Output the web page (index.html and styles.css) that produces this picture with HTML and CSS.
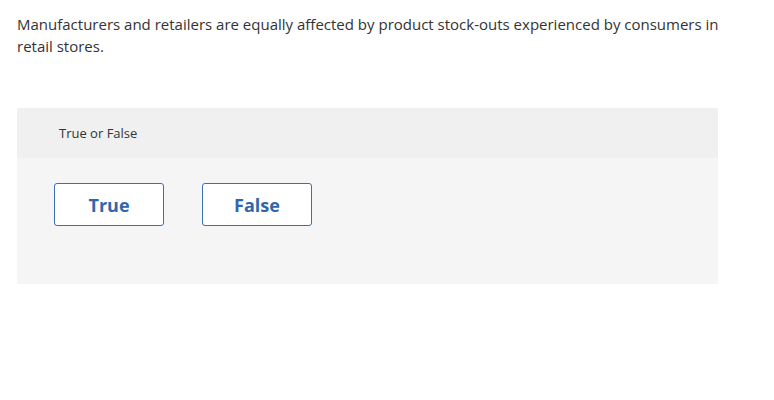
FILE: index.html
```html
<!DOCTYPE html>
<html>
<head>
<meta charset="utf-8">
<link rel="stylesheet" href="styles.css">
</head>
<body>
<div class="page">
  <p class="prompt">Manufacturers and retailers are equally affected by product stock-outs experienced by consumers in retail stores.</p>
  <div class="question">
    <div class="q-header">True or False</div>
    <div class="q-body">
      <button class="choice">True</button>
      <button class="choice">False</button>
    </div>
  </div>
</div>
</body>
</html>
```
FILE: styles.css
```css
html, body {
  margin: 0;
  padding: 0;
  background: #fff;
}
.page {
  padding: 13px 17px 0 17px;
  width: 725px;
  font-family: "Open Sans", "Liberation Sans", sans-serif;
  color: #333;
}
.prompt {
  margin: 0;
  font-size: 15px;
  line-height: 22px;
}
.question {
  width: 701px;
  margin-top: 51px;
  border-radius: 2px;
  overflow: hidden;
}
.q-header {
  background: #f0f0f0;
  height: 50px;
  display: flex;
  align-items: center;
  padding-left: 42px;
  font-size: 13px;
  color: #333;
}
.q-body {
  background: #f5f5f5;
  height: 126px;
  box-sizing: border-box;
  padding: 25px 37px 0 37px;
  display: flex;
  gap: 38px;
  align-items: flex-start;
}
.choice {
  width: 110px;
  height: 43px;
  background: #fff;
  border: 1px solid #3a6fb0;
  border-radius: 3px;
  font-family: "Open Sans", "Liberation Sans", sans-serif;
  font-weight: 700;
  font-size: 18px;
  color: #3166ad;
  padding: 0;
}
```
